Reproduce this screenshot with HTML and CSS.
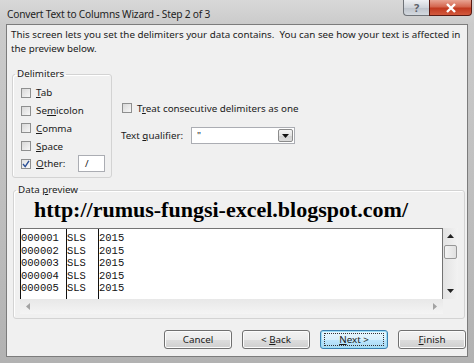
FILE: index.html
```html
<!DOCTYPE html>
<html>
<head>
    <title>Convert Text to Columns Wizard</title>
    <link rel="stylesheet" href="styles.css">
</head>
<body>

<div class="window">
    <div class="titlebar">
        <span class="title">Convert Text to Columns Wizard - Step 2 of 3</span>
        <div class="caption">
            <span class="cap-help">?</span>
            <span class="cap-close">
                <svg width="12" height="10" viewBox="0 0 12 10"><path d="M2 1 L10 9 M10 1 L2 9" stroke="#fff" stroke-width="2.4" fill="none"/></svg>
            </span>
        </div>
    </div>

    <div class="client">
        <p class="intro">This screen lets you set the delimiters your data contains.&nbsp; You can see how your text is affected in<br>the preview below.</p>

        <div class="top-row">
            <fieldset class="delims">
                <legend>Delimiters</legend>
                <div class="list">
                    <label class="check"><span class="box"></span><span><u>T</u>ab</span></label>
                    <label class="check"><span class="box"></span><span>Se<u>m</u>icolon</span></label>
                    <label class="check"><span class="box"></span><span><u>C</u>omma</span></label>
                    <label class="check"><span class="box"></span><span><u>S</u>pace</span></label>
                    <label class="check">
                        <span class="box checked"><svg width="8" height="8" viewBox="0 0 8 8"><path d="M1 4 L3.2 6.6 L7 0.8" stroke="#2b4f96" stroke-width="1.4" fill="none"/></svg></span>
                        <span><u>O</u>ther:</span>
                        <span class="textbox">/</span>
                    </label>
                </div>
            </fieldset>

            <div class="options">
                <label class="check"><span class="box"></span><span>T<u>r</u>eat consecutive delimiters as one</span></label>
                <div class="qualifier">
                    <span class="qlabel">Text <u>q</u>ualifier:</span>
                    <div class="combo">
                        <span class="value">"</span>
                        <span class="drop"><svg width="7" height="4" viewBox="0 0 7 4"><path d="M0 0 H7 L3.5 4 Z" fill="#111"/></svg></span>
                    </div>
                </div>
            </div>
        </div>

        <fieldset class="preview">
            <legend>Data <u>p</u>review</legend>
            <div class="url">http://rumus-fungsi-excel.blogspot.com/</div>
            <div class="grid">
                <div class="sheet">
                    <div class="col c1">000001<br>000002<br>000003<br>000004<br>000005</div>
                    <div class="col c2">SLS<br>SLS<br>SLS<br>SLS<br>SLS</div>
                    <div class="col c3">2015<br>2015<br>2015<br>2015<br>2015</div>
                </div>
                <div class="vscroll">
                    <svg width="7" height="4" viewBox="0 0 7 4"><path d="M0 4 H7 L3.5 0 Z" fill="#222"/></svg>
                    <span class="thumb"></span>
                    <svg class="down" width="7" height="4" viewBox="0 0 7 4"><path d="M0 0 H7 L3.5 4 Z" fill="#222"/></svg>
                </div>
            </div>
            <div class="grid">
                <div class="hscroll">
                    <svg width="4" height="7" viewBox="0 0 4 7"><path d="M4 0 V7 L0 3.5 Z" fill="#a3a3a3"/></svg>
                    <svg width="4" height="7" viewBox="0 0 4 7"><path d="M0 0 V7 L4 3.5 Z" fill="#a3a3a3"/></svg>
                </div>
                <div class="corner"></div>
            </div>
        </fieldset>

        <div class="buttons">
            <button>Cancel</button>
            <button>&lt; <u>B</u>ack</button>
            <button class="default"><span class="focus"><u>N</u>ext &gt;</span></button>
            <button><u>F</u>inish</button>
        </div>
    </div>
</div>

</body>
</html>
```

FILE: styles.css
```css
* { box-sizing: border-box; }
body { margin: 0; font-family: "Noto Sans", sans-serif; font-size: 9.8px; color: #1b1b1b; background: #b5b5b5; }
u { text-decoration: underline; text-underline-offset: 1px; }

.window { width: 474px; height: 363px; display: flex; flex-direction: column; background: linear-gradient(to bottom, #d8d8d8 0, #cbcbcb 24px, #bdbdbd 60%, #b2b2b2 100%); }

.titlebar { height: 24px; flex: none; display: flex; justify-content: space-between; align-items: flex-start; padding-left: 7px; }
.title { font-size: 10.2px; letter-spacing: -0.2px; line-height: 14px; margin-top: 7px; color: #1e1e1e; }
.caption { display: flex; margin-right: 2px; }
.cap-help { width: 26px; height: 16px; border: 1px solid #6f7378; border-top: none; border-right: none; border-radius: 0 0 0 4px; background: linear-gradient(to bottom, #eef0f3, #cfd4da 50%, #bcc2ca 51%, #d4d9df); color: #5b6068; font-size: 11px; font-weight: bold; text-align: center; line-height: 15px; }
.cap-close { width: 43px; height: 16px; border: 1px solid #5a1a12; border-top: none; border-radius: 0 0 4px 0; background: linear-gradient(to bottom, #e8a493, #d4664f 45%, #c1391f 55%, #d35a3e); display: flex; align-items: center; justify-content: center; }

.client { flex: 1; margin: 0 6px 6px 6px; border: 1px solid #7c7c7c; background: #f0f0f0; padding: 3px 1px 0 4px; display: flex; flex-direction: column; }
.intro { margin: 0 0 12px; line-height: 14px; }

fieldset { margin: 0; padding: 0; border: 1px solid #d3d3d3; border-radius: 3px; box-shadow: inset 1px 1px #fff; min-width: 0; }
legend { margin-left: 2px; padding: 0 2px; line-height: 12px; }

.top-row { display: flex; align-items: flex-start; }
.delims { margin-left: 1px; width: 100px; height: 110px; }
.list { padding: 4px 0 0 8px; }
.check { display: flex; align-items: center; height: 17.75px; }
.box { width: 10px; height: 10px; flex: none; margin-right: 5px; border: 1px solid #8e8f8f; background: linear-gradient(135deg, #d8d8d8, #f7f7f7); display: flex; align-items: center; justify-content: center; }
.box.checked { background: linear-gradient(135deg, #e2e2e2, #fafafa); }
.textbox { margin-left: auto; margin-right: 6px; width: 27px; height: 17px; border: 1px solid #abadb3; background: #fff; padding-left: 6px; line-height: 15px; }

.options { margin-left: 10px; padding-top: 32px; }
.options .check { height: 16px; }
.qualifier { display: flex; align-items: center; margin-top: 11px; margin-left: -1px; }
.qlabel { width: 70px; }
.combo { width: 104px; height: 17px; border: 1px solid #abadb3; background: #fff; display: flex; align-items: center; justify-content: space-between; padding: 1px; }
.value { padding-left: 4px; line-height: 13px; align-self: flex-start; }
.drop { width: 15px; height: 13px; border: 1px solid #8b8b8b; border-radius: 2px; background: linear-gradient(to bottom, #f4f4f4, #e4e4e4 50%, #d2d2d2 51%, #dcdcdc); display: flex; align-items: center; justify-content: center; }

.preview { margin: 6px 1px 0 2px; height: 135px; }
.url { margin: 5px 0 9px 20px; font-family: "Liberation Serif", serif; font-weight: bold; font-size: 22px; line-height: 18px; color: #000; }
.grid { display: flex; margin-left: 6px; }
.sheet { width: 423px; height: 71px; background: #fff; border: 1px solid #737373; border-left: none; border-bottom: none; display: flex; font-family: "Liberation Mono", monospace; font-size: 10.5px; line-height: 12.6px; color: #111; }
.col { border-left: 1px solid #111; padding-top: 3px; }
.c1 { width: 46px; }
.c2 { width: 32px; }
.c3 { flex: 1; }
.vscroll { width: 15px; height: 71px; background: linear-gradient(to right, #e3e3e3, #f2f2f2); display: flex; flex-direction: column; align-items: center; padding-top: 6px; }
.thumb { width: 13px; height: 14px; margin-top: 7px; border: 1px solid #979797; border-radius: 2px; background: linear-gradient(to right, #f3f3f3, #e0e0e0); }
.down { margin-top: auto; margin-bottom: 6px; }
.hscroll { width: 423px; height: 15px; background: linear-gradient(to bottom, #e8e8e8, #f4f4f4); display: flex; align-items: center; justify-content: space-between; padding: 0 6px; }
.corner { width: 15px; height: 15px; background: #f0f0f0; }

.buttons { display: flex; justify-content: flex-end; gap: 10px; margin-top: 11px; }
button { width: 68px; height: 19px; padding: 0; font-family: "Noto Sans", sans-serif; font-size: 9.8px; color: #1b1b1b; border: 1px solid #707070; border-radius: 3px; background: linear-gradient(to bottom, #f2f2f2, #ebebeb 50%, #dddddd 51%, #cfcfcf); box-shadow: inset 0 0 0 1px #fcfcfc; }
button.default { border-color: #3c7fb1; box-shadow: inset 0 0 0 1px #9fe0f7; background: linear-gradient(to bottom, #eaf6fd, #d9f0fc 50%, #bee6fd 51%, #a7d9f5); }
.focus { display: inline-block; width: 60px; border: 1px dotted #333; line-height: 11px; }
```
